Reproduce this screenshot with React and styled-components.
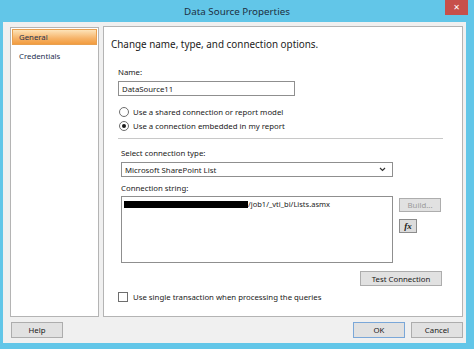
import React from "react";
import styled, { createGlobalStyle } from "styled-components";

const GlobalStyle = createGlobalStyle`
  html, body {
    margin: 0;
    padding: 0;
    background: #62c6e8;
  }
  * {
    box-sizing: border-box;
  }
`;

const Frame = styled.div`
  width: 474px;
  height: 349px;
  background: #62c6e8;
  display: flex;
  flex-direction: column;
  padding: 0 8px 6px 3px;
  font-family: "Noto Sans", "Open Sans", sans-serif;
  color: #1a1a1a;
  overflow: hidden;
`;

const TitleBar = styled.div`
  position: relative;
  height: 22px;
  padding-left: 5px;
  display: flex;
  align-items: center;
  justify-content: center;
  font-size: 9.8px;
  color: #1d2f3f;
`;

const CloseButton = styled.div`
  position: absolute;
  top: 0;
  right: -2px;
  width: 23px;
  height: 15px;
  background: #c7504a;
  display: flex;
  align-items: center;
  justify-content: center;
  color: #fff;
  font-size: 8px;
  font-weight: bold;
  font-family: "DejaVu Sans", sans-serif;
`;

const Body = styled.div`
  flex: 1;
  background: #f0f0f0;
  display: flex;
  flex-direction: column;
  padding: 4px 3px 5px 7px;
`;

const Main = styled.div`
  flex: 1;
  display: flex;
  gap: 4px;
`;

const Nav = styled.div`
  width: 89px;
  margin-top: 1px;
  background: #fff;
  border: 1px solid #b4b4b4;
  padding: 1px;
  display: flex;
  flex-direction: column;
`;

const NavItem = styled.div`
  height: 16px;
  padding-left: 6px;
  display: flex;
  align-items: center;
  font-size: 7.8px;
  color: #1e3050;
  margin-bottom: 3px;
  background: ${(p) =>
    p.active ? "linear-gradient(#fde3b8, #f6b368 60%, #f29c3f)" : "transparent"};
  border: 1px solid ${(p) => (p.active ? "#e8a050" : "transparent")};
`;

const Content = styled.div`
  flex: 1;
  background: #fff;
  border: 1px solid #b4b4b4;
  padding: 10px 19px 0 14px;
  display: flex;
  flex-direction: column;
  font-size: 7.8px;
`;

const Heading = styled.div`
  font-size: 9.9px;
  line-height: 14px;
  margin-left: -7px;
  color: #1a1a1a;
`;

const Label = styled.div`
  line-height: 12px;
  margin-top: ${(p) => p.top || 0}px;
`;

const TextInput = styled.div`
  width: 177px;
  height: 15px;
  margin-top: 3px;
  border: 1px solid #8f8f8f;
  padding-left: 3px;
  display: flex;
  align-items: center;
  background: #fff;
`;

const Choices = styled.div`
  margin-top: 9px;
  padding-left: 1px;
  display: flex;
  flex-direction: column;
`;

const Choice = styled.label`
  height: 14px;
  display: flex;
  align-items: center;
  gap: 4px;
`;

const Radio = styled.span`
  width: 10px;
  height: 10px;
  border-radius: 50%;
  border: 1px solid #6e6e6e;
  background: #fff;
  display: flex;
  align-items: center;
  justify-content: center;
  &::after {
    content: "";
    width: 4px;
    height: 4px;
    border-radius: 50%;
    background: ${(p) => (p.checked ? "#1a1a1a" : "transparent")};
  }
`;

const Separator = styled.div`
  height: 1px;
  background: #c8c8c8;
  margin-top: 5px;
`;

const Connection = styled.div`
  margin-left: 3px;
  display: flex;
  flex-direction: column;
`;

const Select = styled.div`
  width: 272px;
  height: 15px;
  margin-top: 3px;
  border: 1px solid #8f8f8f;
  padding: 0 6px 0 3px;
  display: flex;
  align-items: center;
  justify-content: space-between;
`;

const StringRow = styled.div`
  display: flex;
  gap: 6px;
  margin-top: 2px;
`;

const TextArea = styled.div`
  width: 272px;
  height: 67px;
  border: 1px solid #8f8f8f;
  padding: 2px 2px;
  font-size: 7.5px;
  line-height: 10px;
`;

const Redacted = styled.span`
  display: inline-block;
  width: 124px;
  height: 7px;
  background: #000;
  vertical-align: -1px;
`;

const SideButtons = styled.div`
  display: flex;
  flex-direction: column;
  gap: 7px;
  padding-top: 2px;
`;

const Button = styled.div`
  width: ${(p) => p.w}px;
  height: ${(p) => p.h || 15}px;
  background: #e1e1e1;
  border: 1px solid ${(p) => (p.primary ? "#7aa7d8" : "#adadad")};
  color: ${(p) => (p.disabled ? "#9a9a9a" : "#1a1a1a")};
  display: flex;
  align-items: center;
  justify-content: center;
  font-size: 7.8px;
`;

const FxButton = styled(Button)`
  font-family: "Liberation Serif", serif;
  font-style: italic;
  font-weight: bold;
  font-size: 9px;
  background: #dcdcdc;
  border-color: #8c8c8c;
`;

const TestRow = styled.div`
  display: flex;
  justify-content: flex-end;
  margin-top: 8px;
  margin-right: 1px;
`;

const CheckRow = styled.label`
  display: flex;
  align-items: center;
  gap: 5px;
  margin-top: 6px;
`;

const Checkbox = styled.span`
  width: 10px;
  height: 10px;
  border: 1px solid #6e6e6e;
  background: #fff;
`;

const Footer = styled.div`
  display: flex;
  align-items: center;
  margin-top: 5px;
  padding-left: 1px;
`;

const FooterRight = styled.div`
  margin-left: auto;
  display: flex;
  gap: 6px;
`;

export default function App() {
  return (
    <>
      <GlobalStyle />
      <Frame>
        <TitleBar>
          Data Source Properties
          <CloseButton>✕</CloseButton>
        </TitleBar>
        <Body>
          <Main>
            <Nav>
              <NavItem active>General</NavItem>
              <NavItem>Credentials</NavItem>
            </Nav>
            <Content>
              <Heading>Change name, type, and connection options.</Heading>
              <Label top={15}>Name:</Label>
              <TextInput>DataSource11</TextInput>
              <Choices>
                <Choice>
                  <Radio />
                  Use a shared connection or report model
                </Choice>
                <Choice>
                  <Radio checked />
                  Use a connection embedded in my report
                </Choice>
              </Choices>
              <Separator />
              <Connection>
                <Label top={8}>Select connection type:</Label>
                <Select>
                  <span>Microsoft SharePoint List</span>
                  <svg width="7" height="5" viewBox="0 0 7 5">
                    <path d="M1 1 L3.5 3.5 L6 1" fill="none" stroke="#333" strokeWidth="1.2" />
                  </svg>
                </Select>
                <Label top={5}>Connection string:</Label>
                <StringRow>
                  <TextArea>
                    <Redacted />
                    /job1/_vti_bi/Lists.asmx
                  </TextArea>
                  <SideButtons>
                    <Button w={42} h={14} disabled>
                      Build...
                    </Button>
                    <FxButton w={18} h={14}>
                      fx
                    </FxButton>
                  </SideButtons>
                </StringRow>
              </Connection>
              <TestRow>
                <Button w={82}>Test Connection</Button>
              </TestRow>
              <CheckRow>
                <Checkbox />
                Use single transaction when processing the queries
              </CheckRow>
            </Content>
          </Main>
          <Footer>
            <Button w={52} h={16}>
              Help
            </Button>
            <FooterRight>
              <Button w={52} h={16} primary>
                OK
              </Button>
              <Button w={52} h={16}>
                Cancel
              </Button>
            </FooterRight>
          </Footer>
        </Body>
      </Frame>
    </>
  );
}
